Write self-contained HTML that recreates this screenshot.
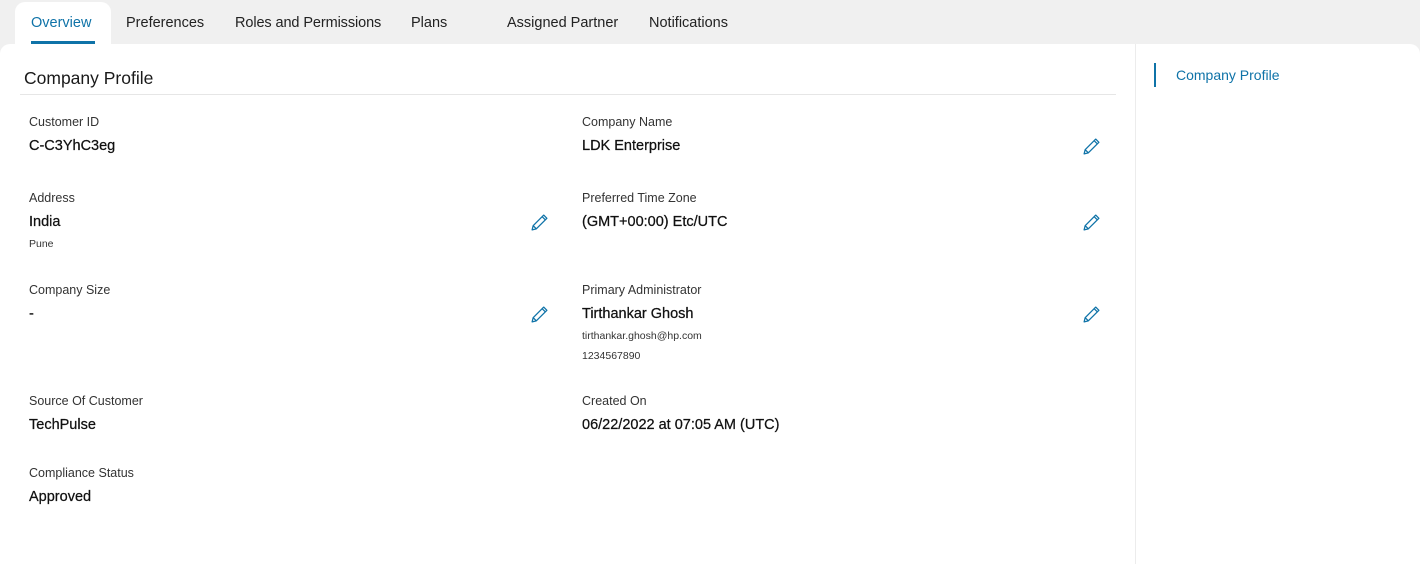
<!DOCTYPE html>
<html><head><style>
*{margin:0;padding:0;box-sizing:border-box}
body{width:1420px;height:564px;background:#f0f0f0;font-family:"Liberation Sans",sans-serif;color:#1a1a1a;position:relative;overflow:hidden}
.tabs{position:absolute;top:0;left:0;height:44px;width:100%}
.tab{position:absolute;top:15px;font-size:14.5px;color:#222}
.act{position:absolute;left:15px;top:2px;width:96px;height:44px;background:#fff;border-radius:10px 10px 0 0}
.ul{position:absolute;left:31px;top:41px;width:64px;height:3px;background:#0f73a8}
.panel{position:absolute;left:0;top:44px;width:1420px;height:530px;background:#fff;border-radius:10px 10px 0 0}
.div{position:absolute;left:1135px;top:44px;width:1px;height:520px;background:#ececec}
h2{position:absolute;left:24px;top:68px;font-size:17.5px;font-weight:normal;color:#1a1a1a}
.hr{position:absolute;left:20px;top:94px;width:1096px;height:1px;background:#e6e6e6}
.l{position:absolute;font-size:12.5px;color:#333;margin-top:1px}
.v{position:absolute;font-size:14.5px;color:#111;margin-top:1px;-webkit-text-stroke:0.25px #111}
.s{position:absolute;font-size:10.5px;color:#333;margin-top:1px}
.p{position:absolute;width:19px;height:19px}
.side{position:absolute;left:1154px;top:63px;width:2px;height:24px;background:#0f73a8}
</style></head><body>
<div class="tabs">
<div class="act"></div><div class="ul"></div>
<div class="tab" style="left:31px;color:#0f73a8">Overview</div>
<div class="tab" style="left:126px">Preferences</div>
<div class="tab" style="left:235px;letter-spacing:-0.1px">Roles and Permissions</div>
<div class="tab" style="left:411px">Plans</div>
<div class="tab" style="left:507px">Assigned Partner</div>
<div class="tab" style="left:649px">Notifications</div>
</div>
<div class="panel"></div>
<div class="div"></div>
<h2>Company Profile</h2>
<div class="hr"></div>
<div class="side"></div>
<div style="position:absolute;left:1176px;top:67px;font-size:14px;color:#0f73a8">Company Profile</div>

<div class="l" style="left:29px;top:114px">Customer ID</div>
<div class="v" style="left:29px;top:137px">C-C3YhC3eg</div>
<div class="l" style="left:582px;top:114px">Company Name</div>
<div class="v" style="left:582px;top:137px">LDK Enterprise</div>

<div class="l" style="left:29px;top:190px">Address</div>
<div class="v" style="left:29px;top:213px">India</div>
<div class="s" style="left:29px;top:237px">Pune</div>
<div class="l" style="left:582px;top:190px">Preferred Time Zone</div>
<div class="v" style="left:582px;top:213px">(GMT+00:00) Etc/UTC</div>

<div class="l" style="left:29px;top:282px">Company Size</div>
<div class="v" style="left:29px;top:305px">-</div>
<div class="l" style="left:582px;top:282px">Primary Administrator</div>
<div class="v" style="left:582px;top:305px">Tirthankar Ghosh</div>
<div class="s" style="left:582px;top:329px">tirthankar.ghosh@hp.com</div>
<div class="s" style="left:582px;top:349px">1234567890</div>

<div class="l" style="left:29px;top:393px">Source Of Customer</div>
<div class="v" style="left:29px;top:416px">TechPulse</div>
<div class="l" style="left:582px;top:393px">Created On</div>
<div class="v" style="left:582px;top:416px">06/22/2022 at 07:05 AM (UTC)</div>

<div class="l" style="left:29px;top:465px">Compliance Status</div>
<div class="v" style="left:29px;top:488px">Approved</div>

<svg width="0" height="0" style="position:absolute"><defs><symbol id="pen" viewBox="0 0 18 18"><path d="M2 16 L3 12 L13 2 L16 5 L6 15 Z M11.5 3.5 L14.5 6.5 M3 12 L6 15" fill="none" stroke="#0f73a8" stroke-width="1.2" stroke-linejoin="round"/></symbol></defs></svg>
<svg class="p" style="left:1082px;top:137px"><use href="#pen"/></svg>
<svg class="p" style="left:530px;top:213px"><use href="#pen"/></svg>
<svg class="p" style="left:1082px;top:213px"><use href="#pen"/></svg>
<svg class="p" style="left:530px;top:305px"><use href="#pen"/></svg>
<svg class="p" style="left:1082px;top:305px"><use href="#pen"/></svg>
</body></html>
